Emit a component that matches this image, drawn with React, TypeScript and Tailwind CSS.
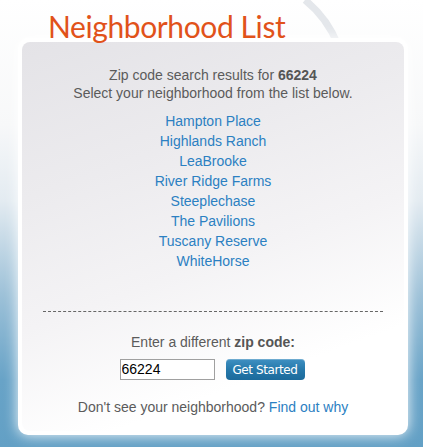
const neighborhoods = [
    'Hampton Place',
    'Highlands Ranch',
    'LeaBrooke',
    'River Ridge Farms',
    'Steeplechase',
    'The Pavilions',
    'Tuscany Reserve',
    'WhiteHorse',
];

export default function App() {
    return (
        <div className="relative w-[423px] h-[447px] overflow-hidden bg-[linear-gradient(180deg,#ffffff_0%,#f7f8f9_28%,#e3ebf1_45%,#9dc1d8_66%,#68a3c7_85%,#63a0c5_100%)] font-['Liberation_Sans',Arial,sans-serif]">
            {/* background swoosh */}
            <svg className="absolute inset-0 pointer-events-none" width="423" height="447" viewBox="0 0 423 447">
                <path d="M305 0 C 320 12, 330 25, 338 45" stroke="#e4e7eb" strokeWidth="7" fill="none" />
            </svg>

            <div className="relative flex flex-col">
                <h1 className="relative z-10 pl-[48px] pt-[8px] -mb-[6px] text-[30px] leading-[36px] text-[#e1521a] font-['Lato',sans-serif] tracking-[-0.4px]">
                    Neighborhood List
                </h1>

                <div className="ml-[18px] w-[390px] h-[397px] rounded-[10px] bg-white p-[4px] shadow-[0_0_14px_rgba(255,255,255,0.95)]">
                    <div className="h-full rounded-[8px] bg-[linear-gradient(160deg,#e4e3e7_0%,#ecebee_30%,#f4f3f5_55%,#ffffff_80%)] flex flex-col items-center text-[14px] text-[#5b5b5b]">
                        <div className="mt-[24px] text-center leading-[18px]">
                            <div>Zip code search results for <b className="text-[#555]">66224</b></div>
                            <div>Select your neighborhood from the list below.</div>
                        </div>

                        <ul className="mt-[9px] flex flex-col items-center">
                            {neighborhoods.map(n => (
                                <li key={n} className="leading-[20px] text-[#2b80c2] cursor-pointer">{n}</li>
                            ))}
                        </ul>

                        <div className="mt-[40px] w-[340px] border-t border-dashed border-[#666]"></div>

                        <div className="mt-[21px] leading-[18px]">
                            Enter a different <b className="text-[#555]">zip code:</b>
                        </div>

                        <div className="mt-[8px] flex items-center gap-[11px] pr-[2px]">
                            <input
                                defaultValue="66224"
                                className="w-[95px] h-[21px] border border-[#a0a0a0] bg-white text-black text-[14px] pl-[1px] outline-none"
                            />
                            <button className="w-[79px] h-[21px] rounded-[4px] bg-[linear-gradient(180deg,#3f90c2_0%,#2679ab_50%,#1c6a9b_100%)] text-white text-[12px] font-['DejaVu_Sans',sans-serif] tracking-[-0.4px] leading-none shadow-[inset_0_1px_0_rgba(255,255,255,0.25)]">
                                Get Started
                            </button>
                        </div>

                        <div className="mt-[18px] leading-[18px]">
                            Don't see your neighborhood? <span className="text-[#2b80c2]">Find out why</span>
                        </div>
                    </div>
                </div>
            </div>
        </div>
    );
}
